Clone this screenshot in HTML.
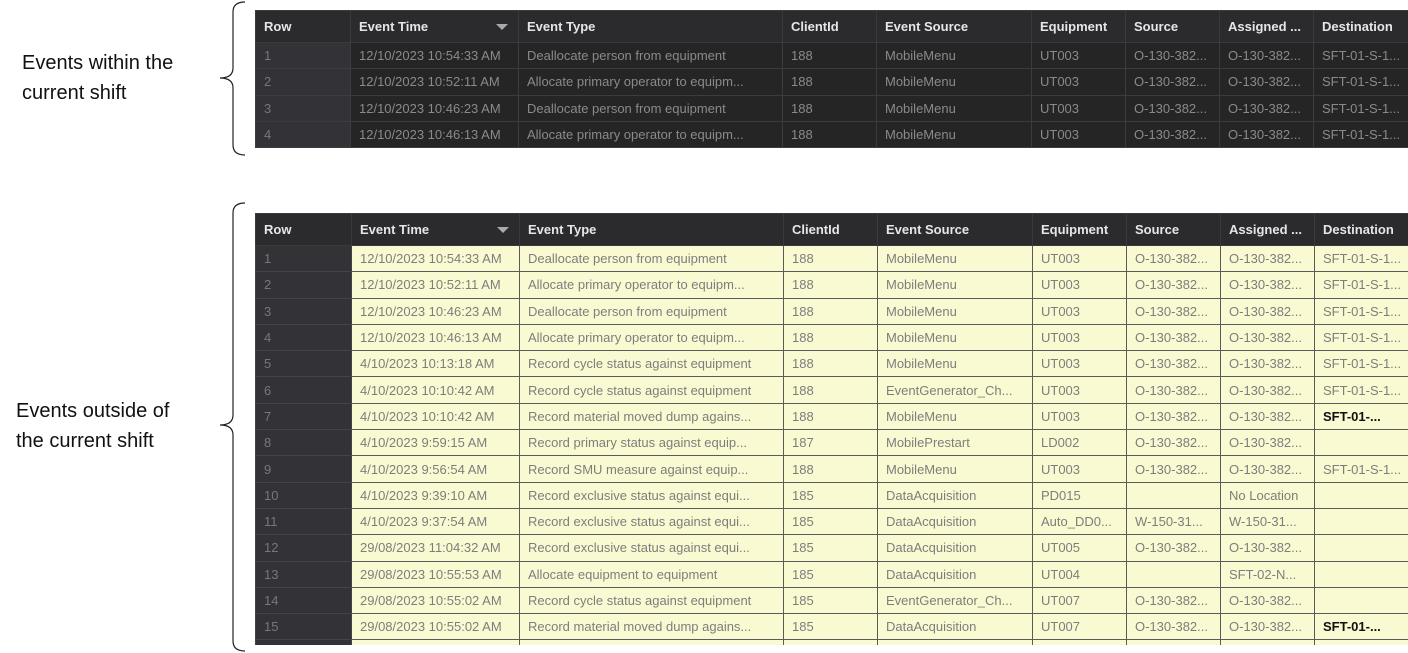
<!DOCTYPE html>
<html><head><meta charset="utf-8"><style>
body{margin:0;width:1408px;height:653px;background:#fff;position:relative;overflow:hidden;font-family:"Liberation Sans",sans-serif}
.lbl{position:absolute;font-size:20px;line-height:30px;color:#111}
table{position:absolute;border-collapse:collapse;table-layout:fixed;font-size:13px;background:#252526}
td,th{height:25.3px;padding:0 0 0 8px;white-space:nowrap;overflow:hidden;text-align:left;border:1px solid #3c3c3f;color:#8a8a8a;font-weight:normal}
th{background:#2b2b2e;color:#e6e6e6;font-weight:bold;height:31px;border-color:#3a3a3d}
td.r{background:#333337;color:#777}
.y td{background:#fafad2;border-color:#5a5a5a;color:#7d7d7d}
.y td.r{background:#333337;border-color:#444;color:#777}
.y td.b{color:#111;font-weight:bold}
.arr{float:right;margin-right:10px;margin-top:5px;width:0;height:0;border-left:6px solid transparent;border-right:6px solid transparent;border-top:6px solid #aaa}
</style></head><body>
<div class="lbl" style="left:22px;top:48px">Events within the<br>current shift</div>
<div class="lbl" style="left:16px;top:396px">Events outside of<br>the current shift</div>
<svg width="260" height="653" style="position:absolute;left:0;top:0" fill="none" stroke="#222" stroke-width="1.2">
<path d="M245 2 Q233 2 233 12 L233 68 Q233 78 220 78 Q233 78 233 88 L233 145 Q233 155 245 155"/>
<path d="M245 203 Q233 203 233 213 L233 415 Q233 425 220 425 Q233 425 233 435 L233 641 Q233 651 245 651"/>
</svg>
<table style="left:255px;top:10px;width:1153px">
<colgroup><col style="width:95px"><col style="width:168px"><col style="width:264px"><col style="width:94px"><col style="width:155px"><col style="width:94px"><col style="width:94px"><col style="width:94px"><col style="width:95px"></colgroup>
<tr><th>Row</th><th>Event Time<span class="arr"></span></th><th>Event Type</th><th>ClientId</th><th>Event Source</th><th>Equipment</th><th>Source</th><th>Assigned ...</th><th>Destination</th></tr>
<tr><td class="r">1</td><td>12/10/2023 10:54:33 AM</td><td>Deallocate person from equipment</td><td>188</td><td>MobileMenu</td><td>UT003</td><td>O-130-382...</td><td>O-130-382...</td><td>SFT-01-S-1...</td></tr>
<tr><td class="r">2</td><td>12/10/2023 10:52:11 AM</td><td>Allocate primary operator to equipm...</td><td>188</td><td>MobileMenu</td><td>UT003</td><td>O-130-382...</td><td>O-130-382...</td><td>SFT-01-S-1...</td></tr>
<tr><td class="r">3</td><td>12/10/2023 10:46:23 AM</td><td>Deallocate person from equipment</td><td>188</td><td>MobileMenu</td><td>UT003</td><td>O-130-382...</td><td>O-130-382...</td><td>SFT-01-S-1...</td></tr>
<tr><td class="r">4</td><td>12/10/2023 10:46:13 AM</td><td>Allocate primary operator to equipm...</td><td>188</td><td>MobileMenu</td><td>UT003</td><td>O-130-382...</td><td>O-130-382...</td><td>SFT-01-S-1...</td></tr>
</table>
<div style="position:absolute;left:255px;top:213px;width:1153px;height:432px;overflow:hidden;background:#252526">
<table class="y" style="left:0;top:0;width:1153px">
<colgroup><col style="width:96px"><col style="width:168px"><col style="width:264px"><col style="width:94px"><col style="width:155px"><col style="width:94px"><col style="width:94px"><col style="width:94px"><col style="width:94px"></colgroup>
<tr><th>Row</th><th>Event Time<span class="arr"></span></th><th>Event Type</th><th>ClientId</th><th>Event Source</th><th>Equipment</th><th>Source</th><th>Assigned ...</th><th>Destination</th></tr>
<tr><td class="r">1</td><td>12/10/2023 10:54:33 AM</td><td>Deallocate person from equipment</td><td>188</td><td>MobileMenu</td><td>UT003</td><td>O-130-382...</td><td>O-130-382...</td><td>SFT-01-S-1...</td></tr>
<tr><td class="r">2</td><td>12/10/2023 10:52:11 AM</td><td>Allocate primary operator to equipm...</td><td>188</td><td>MobileMenu</td><td>UT003</td><td>O-130-382...</td><td>O-130-382...</td><td>SFT-01-S-1...</td></tr>
<tr><td class="r">3</td><td>12/10/2023 10:46:23 AM</td><td>Deallocate person from equipment</td><td>188</td><td>MobileMenu</td><td>UT003</td><td>O-130-382...</td><td>O-130-382...</td><td>SFT-01-S-1...</td></tr>
<tr><td class="r">4</td><td>12/10/2023 10:46:13 AM</td><td>Allocate primary operator to equipm...</td><td>188</td><td>MobileMenu</td><td>UT003</td><td>O-130-382...</td><td>O-130-382...</td><td>SFT-01-S-1...</td></tr>
<tr><td class="r">5</td><td>4/10/2023 10:13:18 AM</td><td>Record cycle status against equipment</td><td>188</td><td>MobileMenu</td><td>UT003</td><td>O-130-382...</td><td>O-130-382...</td><td>SFT-01-S-1...</td></tr>
<tr><td class="r">6</td><td>4/10/2023 10:10:42 AM</td><td>Record cycle status against equipment</td><td>188</td><td>EventGenerator_Ch...</td><td>UT003</td><td>O-130-382...</td><td>O-130-382...</td><td>SFT-01-S-1...</td></tr>
<tr><td class="r">7</td><td>4/10/2023 10:10:42 AM</td><td>Record material moved dump agains...</td><td>188</td><td>MobileMenu</td><td>UT003</td><td>O-130-382...</td><td>O-130-382...</td><td class="b">SFT-01-...</td></tr>
<tr><td class="r">8</td><td>4/10/2023 9:59:15 AM</td><td>Record primary status against equip...</td><td>187</td><td>MobilePrestart</td><td>LD002</td><td>O-130-382...</td><td>O-130-382...</td><td></td></tr>
<tr><td class="r">9</td><td>4/10/2023 9:56:54 AM</td><td>Record SMU measure against equip...</td><td>188</td><td>MobileMenu</td><td>UT003</td><td>O-130-382...</td><td>O-130-382...</td><td>SFT-01-S-1...</td></tr>
<tr><td class="r">10</td><td>4/10/2023 9:39:10 AM</td><td>Record exclusive status against equi...</td><td>185</td><td>DataAcquisition</td><td>PD015</td><td></td><td>No Location</td><td></td></tr>
<tr><td class="r">11</td><td>4/10/2023 9:37:54 AM</td><td>Record exclusive status against equi...</td><td>185</td><td>DataAcquisition</td><td>Auto_DD0...</td><td>W-150-31...</td><td>W-150-31...</td><td></td></tr>
<tr><td class="r">12</td><td>29/08/2023 11:04:32 AM</td><td>Record exclusive status against equi...</td><td>185</td><td>DataAcquisition</td><td>UT005</td><td>O-130-382...</td><td>O-130-382...</td><td></td></tr>
<tr><td class="r">13</td><td>29/08/2023 10:55:53 AM</td><td>Allocate equipment to equipment</td><td>185</td><td>DataAcquisition</td><td>UT004</td><td></td><td>SFT-02-N...</td><td></td></tr>
<tr><td class="r">14</td><td>29/08/2023 10:55:02 AM</td><td>Record cycle status against equipment</td><td>185</td><td>EventGenerator_Ch...</td><td>UT007</td><td>O-130-382...</td><td>O-130-382...</td><td></td></tr>
<tr><td class="r">15</td><td>29/08/2023 10:55:02 AM</td><td>Record material moved dump agains...</td><td>185</td><td>DataAcquisition</td><td>UT007</td><td>O-130-382...</td><td>O-130-382...</td><td class="b">SFT-01-...</td></tr>
<tr><td class="r"></td><td></td><td></td><td></td><td></td><td></td><td></td><td></td><td></td></tr>
</table></div>
</body></html>
